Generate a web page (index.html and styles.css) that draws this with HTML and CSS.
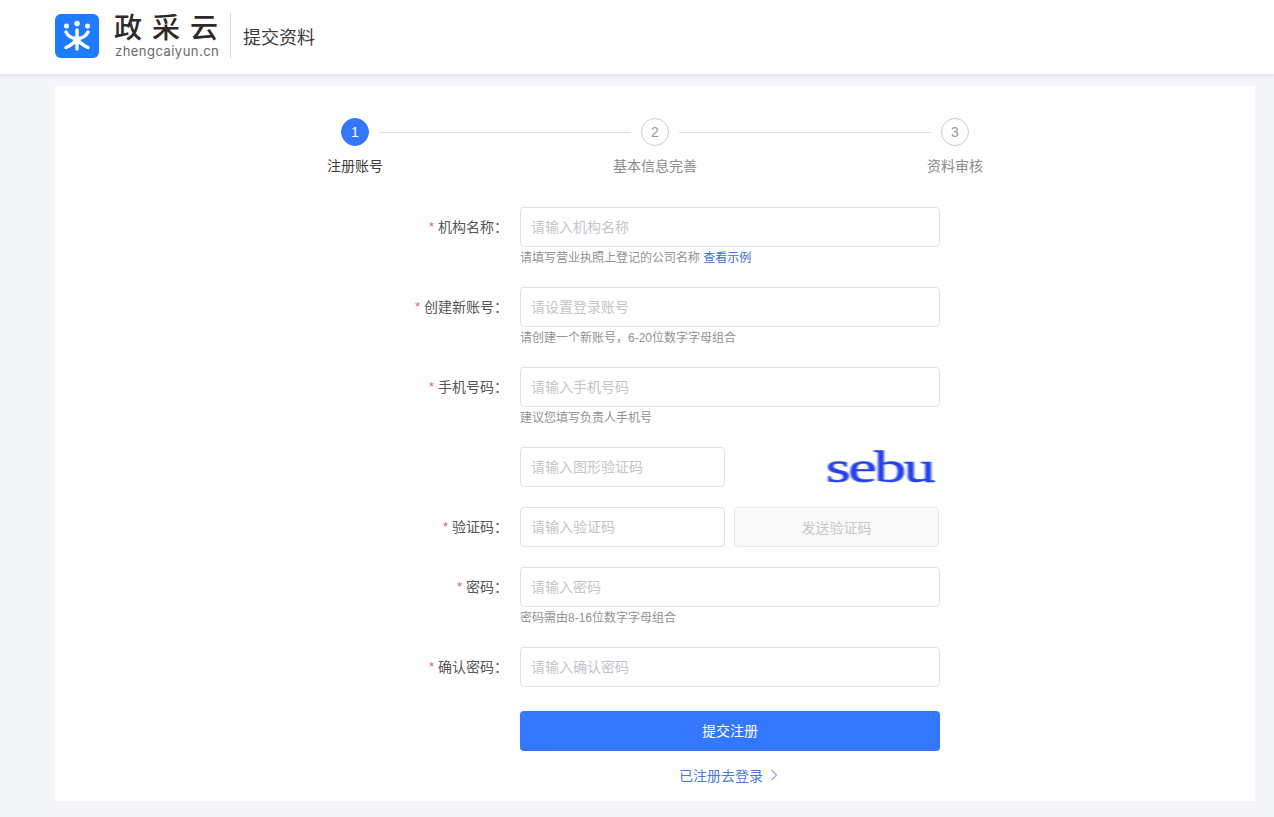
FILE: index.html
```html
<!DOCTYPE html>
<html lang="zh">
<head>
<meta charset="utf-8">
<title>提交资料</title>
<link rel="stylesheet" href="styles.css">
</head>
<body>
<header class="topbar">
  <svg class="logo-icon" width="44" height="44" viewBox="0 0 44 44">
    <rect width="44" height="44" rx="6" fill="#1e7bff"/>
    <circle cx="22" cy="9.500" r="2.700" fill="#fff"/>
    <circle cx="11.500" cy="12" r="2.500" fill="#fff"/>
    <circle cx="32.500" cy="12" r="2.500" fill="#fff"/>
    <path d="M11 18c2 4 5.500 6.500 11 6.500s9-2.500 11-6.500M22 16v19M22 24.500c-2.500 4-6 7-11 9M22 24.500c2.500 4 6 7 11 9" fill="none" stroke="#fff" stroke-width="3.400" stroke-linecap="round"/>
  </svg>
  <div class="brand">
    <div class="brand-cn">政采云</div>
    <div class="brand-en">zhengcaiyun.cn</div>
  </div>
  <div class="brand-sep"></div>
  <div class="page-title">提交资料</div>
</header>
<main class="card">
  <div class="steps">
    <div class="step active">
      <div class="step-dot">1</div>
      <div class="step-label">注册账号</div>
    </div>
    <div class="step-line"></div>
    <div class="step">
      <div class="step-dot">2</div>
      <div class="step-label">基本信息完善</div>
    </div>
    <div class="step-line"></div>
    <div class="step">
      <div class="step-dot">3</div>
      <div class="step-label">资料审核</div>
    </div>
  </div>
  <form class="form">
    <div class="row has-help">
      <label class="label"><span class="req">*</span>机构名称：</label>
      <div class="field"><input class="input" placeholder="请输入机构名称"><div class="help">请填写营业执照上登记的公司名称 <a class="link">查看示例</a></div></div>
    </div>
    <div class="row has-help">
      <label class="label"><span class="req">*</span>创建新账号：</label>
      <div class="field"><input class="input" placeholder="请设置登录账号"><div class="help">请创建一个新账号，6-20位数字字母组合</div></div>
    </div>
    <div class="row has-help">
      <label class="label"><span class="req">*</span>手机号码：</label>
      <div class="field"><input class="input" placeholder="请输入手机号码"><div class="help">建议您填写负责人手机号</div></div>
    </div>
    <div class="row">
      <label class="label"></label>
      <div class="field split">
        <input class="input short" placeholder="请输入图形验证码">
        <div class="captcha"><span class="captcha-text">sebu</span></div>
      </div>
    </div>
    <div class="row">
      <label class="label"><span class="req">*</span>验证码：</label>
      <div class="field split">
        <input class="input short" placeholder="请输入验证码">
        <button type="button" class="send" disabled>发送验证码</button>
      </div>
    </div>
    <div class="row has-help">
      <label class="label"><span class="req">*</span>密码：</label>
      <div class="field"><input class="input" placeholder="请输入密码"><div class="help">密码需由8-16位数字字母组合</div></div>
    </div>
    <div class="row">
      <label class="label"><span class="req">*</span>确认密码：</label>
      <div class="field"><input class="input" placeholder="请输入确认密码"></div>
    </div>
    <div class="row submit-row">
      <label class="label"></label>
      <div class="field">
        <button type="button" class="submit">提交注册</button>
        <a class="login-link">已注册去登录<svg class="chev" width="8" height="12" viewBox="0 0 8 12"><path d="M1.500 1l5 5-5 5" fill="none" stroke="#8ea6e8" stroke-width="1.100"/></svg></a>
      </div>
    </div>
  </form>
</main>
</body>
</html>
```
FILE: styles.css
```css
* { box-sizing: border-box; }
html, body { margin: 0; padding: 0; }
body {
  background: #f4f5f9;
  font-family: "Liberation Sans", "Noto Sans CJK SC", sans-serif;
  font-size: 13px;
  color: #333;
  height: 817px;
  overflow: hidden;
}
.topbar {
  height: 74px;
  background: #fff;
  box-shadow: 0 1px 4px rgba(90, 100, 140, .18);
  display: flex;
  align-items: center;
  padding: 0 0 3px 55px;
  position: relative;
}
.logo-icon { flex: none; }
.brand { margin-left: 15px; width: 105px; }
.brand-cn {
  font-size: 28px;
  line-height: 30px;
  font-weight: 500;
  letter-spacing: 10px;
  color: #2f2a28;
  white-space: nowrap;
  padding-top: 1px;
}
.brand-en {
  font-family: Inter, "Liberation Sans", sans-serif;
  font-size: 13px;
  line-height: 15px;
  letter-spacing: .47px;
  color: #6a6a6a;
  white-space: nowrap;
  padding-left: 1px;
}
.brand-sep { width: 1px; height: 45px; background: #d9d9d9; margin-left: 11px; }
.page-title { margin-left: 12px; font-size: 18px; color: #3c3c3c; }
.card {
  width: 1200px;
  height: 715px;
  margin: 12px 0 0 55px;
  background: #fff;
  padding-top: 32px;
}
.steps {
  display: flex;
  align-items: flex-start;
  margin-left: 272px;
  width: 656px;
}
.step { width: 56px; flex: none; display: flex; flex-direction: column; align-items: center; }
.step-dot {
  width: 28px;
  height: 28px;
  border-radius: 50%;
  border: 1px solid #ccc;
  color: #999;
  font-size: 14px;
  display: flex;
  align-items: center;
  justify-content: center;
}
.step.active .step-dot { background: #3377ff; border-color: #3377ff; color: #fff; }
.step-label { margin-top: 12px; font-size: 14px; line-height: 16px; color: #8c8c8c; white-space: nowrap; }
.step.active .step-label { color: #3c3c3c; }
.step-line { flex: 1; height: 1px; background: #e1e1e1; margin-top: 14px; margin-left: -4px; margin-right: -4px; }
.form { margin-top: 33px; display: flex; flex-direction: column; gap: 20px; }
.row { display: flex; align-items: flex-start; height: 40px; }
.row.has-help { height: 60px; }
.submit-row { margin-top: 4px; }
.label {
  width: 465px;
  flex: none;
  height: 38px;
  padding-right: 12px;
  display: flex;
  align-items: center;
  justify-content: flex-end;
  font-size: 14px;
  color: #555;
  white-space: nowrap;
}
.req { color: #e2645f; margin-right: 4px; font-size: 13px; }
.field { width: 420px; flex: none; }
.split { display: flex; justify-content: space-between; }
.input {
  display: block;
  width: 100%;
  height: 40px;
  border: 1px solid #e2e2e2;
  border-radius: 4px;
  padding: 0 10px;
  font-family: inherit;
  font-size: 14px;
  color: #333;
  outline: none;
  background: #fff;
}
.input::placeholder { color: #c4c4c9; opacity: 1; }
.input.short { width: 205px; flex: none; }
.help { font-size: 12px; line-height: 20px; color: #929292; white-space: nowrap; padding-top: 1px; }
.link { color: #3a6fd8; }
.captcha {
  width: 205px;
  height: 40px;
  display: flex;
  justify-content: flex-end;
  align-items: center;
  padding-right: 7px;
}
.captcha-text {
  font-family: "Liberation Serif", serif;
  font-size: 48px;
  line-height: 40px;
  letter-spacing: -2px;
  color: #2440ea;
  -webkit-text-stroke: .6px #2440ea;
  transform: scale(1.34, .93);
  transform-origin: right center;
  filter: blur(.7px);
}
.send {
  width: 205px;
  margin-right: 1px;
  height: 40px;
  border: 1px solid #e8e8e8;
  border-radius: 4px;
  background: #f9f9f9;
  color: #c8c8c8;
  font-family: inherit;
  font-size: 14px;
  padding: 0 0 1px;
}
.submit {
  display: block;
  width: 100%;
  height: 40px;
  border: 0;
  border-radius: 4px;
  background: #3377ff;
  color: #fff;
  font-family: inherit;
  font-size: 14px;
  padding: 0 0 2px;
}
.login-link {
  display: flex;
  align-items: center;
  justify-content: center;
  margin-top: 14px;
  padding-right: 3px;
  height: 20px;
  font-size: 14px;
  color: #4a7bdc;
  white-space: nowrap;
}
.chev { margin-left: 7px; }
```
